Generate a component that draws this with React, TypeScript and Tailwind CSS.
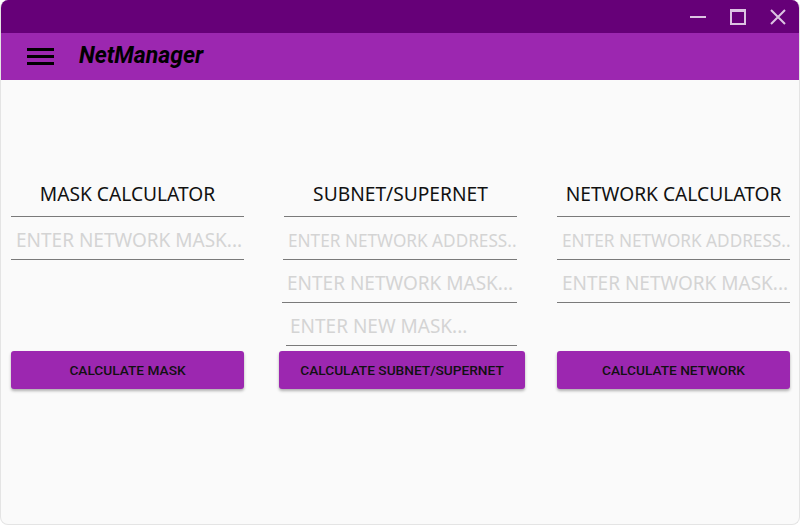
import React from "react";

const Input = ({ text, pl = "pl-[5px]", ml = "", size = "text-[19px]" }: { text: string; pl?: string; ml?: string; size?: string }) => (
  <div className={`h-[43px] pt-[5px] border-b border-[#7a7a7a] flex items-center overflow-hidden whitespace-nowrap ${pl} ${ml}`}>
    <span className={`${size} text-[#d4d4d4] leading-none`}>{text}</span>
  </div>
);

const Title = ({ text }: { text: string }) => (
  <div className="h-[37px] pb-[8px] border-b border-[#7a7a7a] flex items-center justify-center">
    <span className="text-[19.2px] text-[#111] leading-none">{text}</span>
  </div>
);

const Btn = ({ text, cls = "" }: { text: string; cls?: string }) => (
  <button className={`h-[38px] bg-[#9c27b0] rounded-[3px] shadow-[0_2px_3px_rgba(0,0,0,0.3)] flex items-center justify-center text-[13.7px] font-medium text-[#111] ${cls}`} style={{ fontFamily: "Roboto, sans-serif" }}>
    {text}
  </button>
);

export default function App() {
  return (
    <div className="w-[800px] h-[525px] bg-white">
      <div className="w-[800px] h-[525px] rounded-[8px] overflow-hidden flex flex-col bg-[#fafafa] border-l border-r border-b border-[#e4e4e4]" style={{ fontFamily: '"Noto Sans", "Open Sans", sans-serif' }}>
        <div className="h-[33px] bg-[#660078] flex justify-end items-center shrink-0">
          <div className="w-[40px] h-[33px] flex items-center justify-center">
            <div className="w-[16px] h-[2.5px] bg-[#dcc3e2] mt-[1px]" />
          </div>
          <div className="w-[40px] h-[33px] flex items-center justify-center">
            <div className="w-[16px] h-[16px] border-2 border-[#dcc3e2] border-t-[3px]" />
          </div>
          <div className="w-[40px] h-[33px] flex items-center justify-center mr-[1px]">
            <svg width="16" height="16" viewBox="0 0 16 16">
              <path d="M1 1 L15 15 M15 1 L1 15" stroke="#dcc3e2" strokeWidth="2" />
            </svg>
          </div>
        </div>
        <div className="h-[47px] bg-[#9c27b0] flex items-center shrink-0">
          <div className="ml-[26px] w-[27px] flex flex-col gap-[4.5px]">
            <div className="h-[2.5px] bg-black" />
            <div className="h-[2.5px] bg-black" />
            <div className="h-[2.5px] bg-black" />
          </div>
          <span className="ml-[25px] text-[23px] font-bold italic text-black" style={{ fontFamily: "Roboto, sans-serif" }}>
            NetManager
          </span>
        </div>
        <div className="pt-[100px] pl-[10px] pr-[9px]">
          <div className="grid grid-cols-3 gap-x-[40px] items-start">
            <div className="flex flex-col">
              <Title text="MASK CALCULATOR" />
              <Input text="ENTER NETWORK MASK..." />
            </div>
            <div className="flex flex-col">
              <Title text="SUBNET/SUPERNET" />
              <Input text="ENTER NETWORK ADDRESS.." ml="-ml-[1px]" pl="pl-[5px]" size="text-[17.2px]" />
              <Input text="ENTER NETWORK MASK..." ml="-ml-[2px]" pl="pl-[5px]" />
              <Input text="ENTER NEW MASK..." ml="ml-[2px]" pl="pl-[4px]" />
            </div>
            <div className="flex flex-col">
              <Title text="NETWORK CALCULATOR" />
              <Input text="ENTER NETWORK ADDRESS.." size="text-[17.2px]" />
              <Input text="ENTER NETWORK MASK..." />
            </div>
          </div>
          <div className="grid grid-cols-3 gap-x-[40px] mt-[5px]">
            <Btn text="CALCULATE MASK" />
            <Btn text="CALCULATE SUBNET/SUPERNET" cls="-ml-[5px] -mr-[8px]" />
            <Btn text="CALCULATE NETWORK" />
          </div>
        </div>
      </div>
    </div>
  );
}
